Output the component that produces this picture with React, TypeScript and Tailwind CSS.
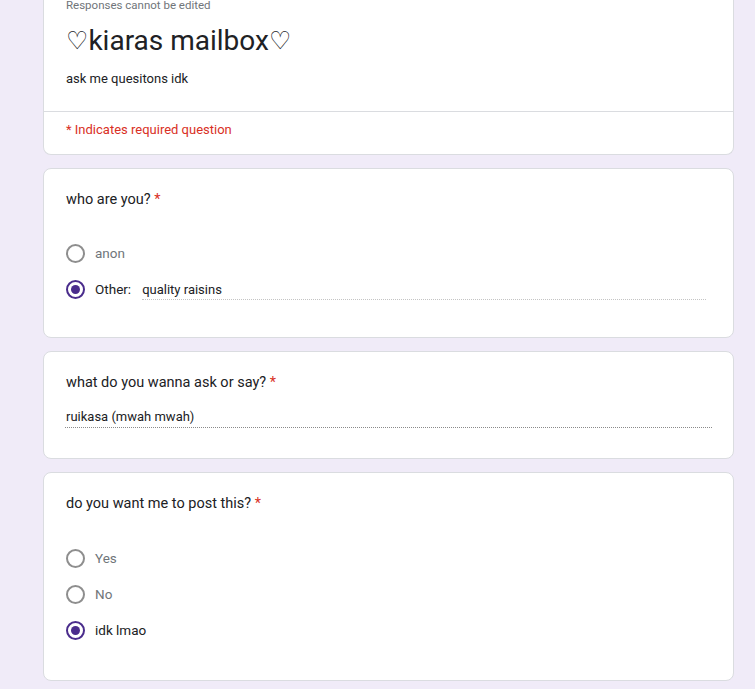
import React from "react";

function Radio({ checked }: { checked?: boolean }) {
  return checked ? (
    <span className="flex h-[19px] w-[19px] shrink-0 items-center justify-center rounded-full border-2 border-[#4a2c8c]">
      <span className="h-[9px] w-[9px] rounded-full bg-[#4a2c8c]" />
    </span>
  ) : (
    <span className="h-[19px] w-[19px] shrink-0 rounded-full border-2 border-[#8e8e8e]" />
  );
}

function Option({ label, checked }: { label: string; checked?: boolean }) {
  return (
    <div className="flex h-[36px] items-center gap-[10px]">
      <Radio checked={checked} />
      <span className={`text-[13.5px] ${checked ? "text-[#202124]" : "text-[#70757a]"}`}>{label}</span>
    </div>
  );
}

function Question({ text }: { text: string }) {
  return (
    <div className="h-[20px] text-[14.5px] leading-[20px] text-[#202124]">
      {text} <span className="text-[#d93025]">*</span>
    </div>
  );
}

export default function App() {
  return (
    <div
      className="min-h-[689px] w-[755px] overflow-hidden bg-[#f0ebf8] pl-[43px]"
      style={{ fontFamily: "Roboto, 'Liberation Sans', sans-serif" }}
    >
      <div className="flex w-[691px] flex-col gap-[13px] pb-[20px]">
        <div className="-mt-[20px] rounded-b-[8px] border border-t-0 border-[#dadce0] bg-white">
          <div className="px-[22px] pt-[17px]">
            <div className="h-[16px] text-[11.5px] leading-[16px] text-[#70757a]">Responses cannot be edited</div>
            <div className="mt-[10px] flex h-[36px] items-center text-[28px] leading-[36px] text-[#202124]">
              <span className="text-[25px]" style={{ fontFamily: "'DejaVu Sans', sans-serif" }}>♡</span>
              <span>kiaras mailbox</span>
              <span className="text-[25px]" style={{ fontFamily: "'DejaVu Sans', sans-serif" }}>♡</span>
            </div>
            <div className="mt-[10px] h-[20px] text-[13px] leading-[20px] text-[#202124]">ask me quesitons idk</div>
          </div>
          <div className="mt-[22px] border-t border-[#dadce0]" />
          <div className="px-[22px] pt-[8px] pb-[14px] text-[13px] leading-[20px] text-[#d93025]">
            * Indicates required question
          </div>
        </div>

        <div className="rounded-[8px] border border-[#dadce0] bg-white px-[22px] pt-[21px] pb-[30px]">
          <Question text="who are you?" />
          <div className="mt-[25px]">
            <Option label="anon" />
            <div className="flex h-[36px] items-center gap-[10px]">
              <Radio checked />
              <span className="text-[13.5px] text-[#202124]">Other:</span>
              <div className="ml-[1px] mr-[5px] flex h-[20px] flex-1 translate-y-[1px] items-center border-b border-dotted border-[#c4c4c4] text-[13px] leading-[20px] text-[#202124]">
                quality raisins
              </div>
            </div>
          </div>
        </div>

        <div className="rounded-[8px] border border-[#dadce0] bg-white px-[21px] pt-[21px] pb-[30px]">
          <div className="pl-[1px]">
            <Question text="what do you wanna ask or say?" />
          </div>
          <div className="mt-[14px] h-[21px] border-b border-dotted border-[#8a8a8a] pl-[1px] text-[13px] leading-[20px] text-[#202124]">
            ruikasa (mwah mwah)
          </div>
        </div>

        <div className="rounded-[8px] border border-[#dadce0] bg-white px-[22px] pt-[21px] pb-[32px]">
          <Question text="do you want me to post this?" />
          <div className="mt-[26px]">
            <Option label="Yes" />
            <Option label="No" />
            <Option label="idk lmao" checked />
          </div>
        </div>
      </div>
    </div>
  );
}
